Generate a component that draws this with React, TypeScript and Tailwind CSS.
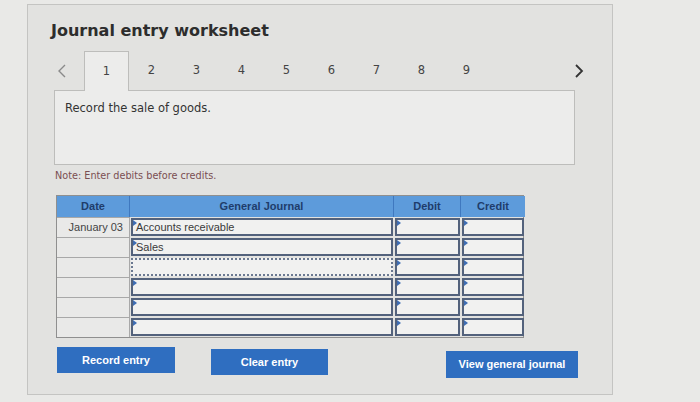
import React from "react";

const tabs = ["1", "2", "3", "4", "5", "6", "7", "8", "9"];

type Row = { date: string; account: string; dotted?: boolean };

const rows: Row[] = [
  { date: "January 03", account: "Accounts receivable" },
  { date: "", account: "Sales" },
  { date: "", account: "", dotted: true },
  { date: "", account: "" },
  { date: "", account: "" },
  { date: "", account: "" },
];

const Marker: React.FC = () => (
  <span className="absolute left-0 top-0 w-0 h-0 border-l-[4px] border-l-[#3e6db3] border-y-[3px] border-y-transparent" />
);

const InputCell: React.FC<{ text?: string; dotted?: boolean }> = ({ text, dotted }) => (
  <div className="p-[1px] h-[20px]">
    <div
      className={
        "relative h-full bg-[#f1f1f0] flex items-center pl-[3px] text-[11px] text-[#3a3a3a] " +
        (dotted ? "border-2 border-dotted border-[#6a7890]" : "border-2 border-[#53627c]")
      }
    >
      {!dotted && <Marker />}
      {text}
    </div>
  </div>
);

const App: React.FC = () => {
  return (
    <div className="w-[700px] h-[402px] bg-[#e9e9e7] pt-[4px] pl-[27px] overflow-hidden" style={{ fontFamily: "'DejaVu Sans', sans-serif" }}>
      <div className="w-[586px] h-[391px] bg-[#e2e2e0] border border-[#c4c4c2] pl-[26px] pr-[12px]">
        <h1 className="mt-[15px] ml-[-3px] text-[16px] font-bold text-[#2d2d2d] leading-[22px]">
          Journal entry worksheet
        </h1>

        <div className="flex items-stretch h-[39px] mt-[9px] w-[521px]">
          <div className="w-[30px] flex items-center pl-[3px]">
            <svg width="10" height="14" viewBox="0 0 10 14" fill="none">
              <polyline points="8,1 2,7 8,13" stroke="#8a8a8a" strokeWidth="1.4" />
            </svg>
          </div>
          {tabs.map((t, i) => (
            <div
              key={t}
              className={
                "w-[45px] flex items-center justify-center text-[11.5px] text-[#444] " +
                (i === 0 ? "relative z-10 -mb-[1px] bg-[#ececeb] border border-b-0 border-[#bdbdbb] w-[44px]" : "")
              }
            >
              {t}
            </div>
          ))}
          <div className="ml-auto mr-[-9px] flex items-center">
            <svg width="10" height="14" viewBox="0 0 10 14" fill="none">
              <polyline points="2,1 8,7 2,13" stroke="#333" strokeWidth="1.8" />
            </svg>
          </div>
        </div>

        <div className="w-[521px] h-[75px] bg-[#ececeb] border border-[#bdbdbb] pl-[10px] pt-[9px] text-[11.5px] text-[#333]">
          Record the sale of goods.
        </div>

        <div className="mt-[4px] ml-[1px] h-[13px] leading-[13px] text-[9.7px] text-[#7a4e52]">Note: Enter debits before credits.</div>

        <div
          className="mt-[13px] ml-[2px] w-[468px] border border-[#8f8f8f] grid grid-cols-[73px_264px_67px_64px]"
          style={{ fontFamily: "'Liberation Sans', Arial, sans-serif" }}
        >
          <div className="h-[21px] bg-[#5d9bdb] border-r border-[#3f78bf] flex items-center justify-center text-[11px] font-bold text-[#1f3d6b]">Date</div>
          <div className="h-[21px] bg-[#5d9bdb] border-r border-[#3f78bf] flex items-center justify-center text-[11px] font-bold text-[#1f3d6b]">General Journal</div>
          <div className="h-[21px] bg-[#5d9bdb] border-r border-[#3f78bf] flex items-center justify-center text-[11px] font-bold text-[#1f3d6b]">Debit</div>
          <div className="h-[21px] bg-[#5d9bdb] flex items-center justify-center text-[11px] font-bold text-[#1f3d6b]">Credit</div>
          {rows.map((r, i) => (
            <React.Fragment key={i}>
              <div className="h-[20px] bg-[#e9e9e8] border-r border-t border-[#a8a8a8] flex items-center justify-end pr-[6px] text-[11px] text-[#444]">
                {r.date}
              </div>
              <InputCell text={r.account} dotted={r.dotted} />
              <InputCell />
              <InputCell />
            </React.Fragment>
          ))}
        </div>

        <div className="flex items-start mt-[9px] ml-[3px]" style={{ fontFamily: "'Liberation Sans', Arial, sans-serif" }}>
          <button className="w-[118px] h-[26px] bg-[#2f6ec0] text-white text-[11px] font-bold">Record entry</button>
          <button className="ml-[36px] mt-[2px] w-[117px] h-[26px] bg-[#2f6ec0] text-white text-[11px] font-bold">Clear entry</button>
          <button className="ml-[118px] mt-[4px] w-[132px] h-[27px] bg-[#2f6ec0] text-white text-[11px] font-bold">View general journal</button>
        </div>
      </div>
    </div>
  );
};

export default App;
